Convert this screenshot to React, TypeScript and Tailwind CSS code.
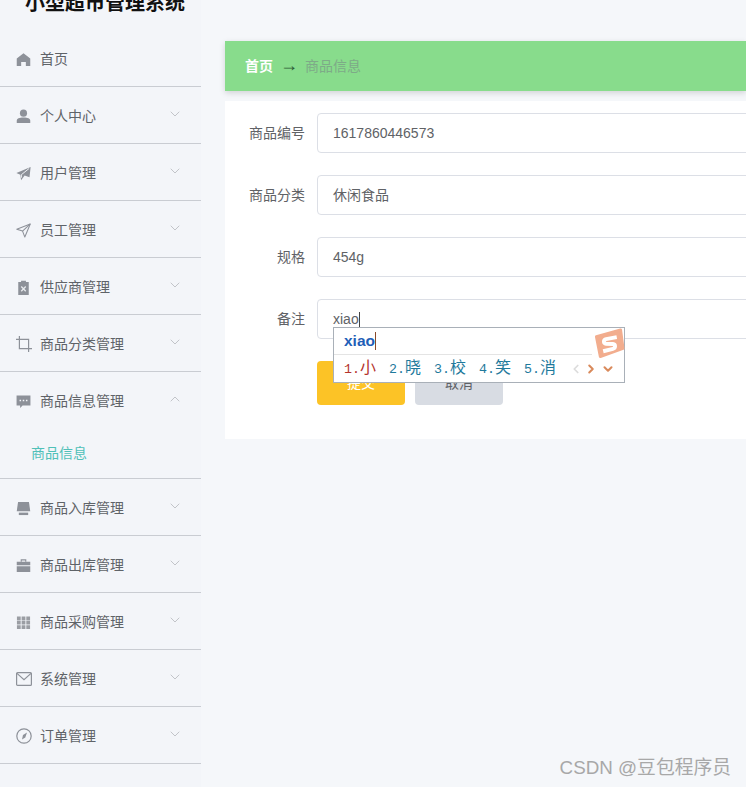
import { ChevronDown, ChevronUp } from 'lucide-react'
import type { ReactNode } from 'react'

const sans = "font-['Liberation_Sans','Noto_Sans_CJK_SC',sans-serif]"

const icons: Record<string, ReactNode> = {
  home: (
    <svg viewBox="0 0 16 16" className="w-[15px] h-[15px]" fill="#8d9199">
      <path d="M8 1.2 15.2 7v8h-4.7v-4.4h-5V15H.8V7z" />
    </svg>
  ),
  user: (
    <svg viewBox="0 0 16 16" className="w-[15px] h-[15px]" fill="#8d9199">
      <circle cx="8" cy="4.4" r="3.8" />
      <path d="M.8 15v-2.6C.8 10.2 3.4 9 8 9s7.2 1.2 7.2 3.4V15z" />
    </svg>
  ),
  plane: (
    <svg viewBox="0 0 16 16" className="w-[15px] h-[15px]">
      <path fill="#8d9199" d="M15.6 1 14.4 12 9.2 10 5.4 15.2l-.8-6L.4 7.4z" />
      <path fill="none" stroke="#f3f5f9" strokeWidth="1" d="M14 2.6 5.6 9.4l.3 3" />
    </svg>
  ),
  send: (
    <svg viewBox="0 0 16 16" className="w-[15px] h-[15px]" fill="none" stroke="#8d9199" strokeWidth="1.1" strokeLinejoin="round">
      <path d="M15.2 1 .8 6.6l6.2 2 2.4 6.4z" />
      <path d="M15.2 1 7 8.6" />
    </svg>
  ),
  clipboard: (
    <svg viewBox="0 0 16 16" className="w-[15px] h-[15px]">
      <path fill="#8d9199" d="M2.4 2h3V.8h5.2V2h3v14H2.4z" />
      <path stroke="#e8eaee" strokeWidth="1.4" d="m5.6 7 4.8 5m0-5-4.8 5" />
    </svg>
  ),
  crop: (
    <svg viewBox="0 0 16 16" className="w-4 h-4 shrink-0" fill="none" stroke="#8d9199" strokeWidth="1.2">
      <path d="M3.4 0v12.6H16" />
      <path d="M0 3.4h12.6V16" />
    </svg>
  ),
  chat: (
    <svg viewBox="0 0 16 16" className="w-[15px] h-[15px]" fill="#8d9199">
      <path d="M.6 1.5h14.8v10.8H7l-2.6 2.6v-2.6H.6z" />
      <path fill="#f3f5f9" d="M3.8 6h1.6v1.6H3.8zm3.4 0h1.6v1.6H7.2zm3.4 0h1.6v1.6h-1.6z" />
    </svg>
  ),
  inbox: (
    <svg viewBox="0 0 16 16" className="w-[15px] h-[15px]" fill="#8d9199">
      <path d="M2.2 1h11.6l1.4 9.8H.8z" />
      <path d="M3 12.4h10V15H3z" />
    </svg>
  ),
  briefcase: (
    <svg viewBox="0 0 16 16" className="w-[15px] h-[15px]" fill="#8d9199">
      <path d="M5 4V1.4h6V4h-1.2V2.6H6.2V4z" />
      <path d="M.8 4h14.4v3.8H.8zm0 4.8h14.4V15H.8z" />
    </svg>
  ),
  grid: (
    <svg viewBox="0 0 16 16" className="w-[15px] h-[15px]" fill="#9a9da3">
      <path d="M1 1.5h4v4H1zm5 0h4v4H6zm5 0h4v4h-4zM1 6.2h4v4H1zm5 0h4v4H6zm5 0h4v4h-4zM1 11h4v4H1zm5 0h4v4H6zm5 0h4v4h-4z" />
    </svg>
  ),
  mail: (
    <svg viewBox="0 0 16 14" className="w-4 h-[14px] shrink-0" fill="none" stroke="#8d9199" strokeWidth="1.2">
      <rect x="0.6" y="0.6" width="14.8" height="12.8" rx="1" />
      <path d="M1 1.4 8 7.6l7-6.2" />
    </svg>
  ),
  compass: (
    <svg viewBox="0 0 16 16" className="w-4 h-4 shrink-0">
      <circle cx="8" cy="8" r="7.2" fill="none" stroke="#8d9199" strokeWidth="1.2" />
      <path fill="#8d9199" d="M11 4.4 9.3 9.4 6 11.6l1-4.6z" />
    </svg>
  ),
}

const menu = [
  { icon: 'home', label: '首页', noArrow: true },
  { icon: 'user', label: '个人中心' },
  { icon: 'plane', label: '用户管理' },
  { icon: 'send', label: '员工管理' },
  { icon: 'clipboard', label: '供应商管理' },
  { icon: 'crop', label: '商品分类管理' },
  { icon: 'chat', label: '商品信息管理', open: true, sub: '商品信息' },
  { icon: 'inbox', label: '商品入库管理' },
  { icon: 'briefcase', label: '商品出库管理' },
  { icon: 'grid', label: '商品采购管理' },
  { icon: 'mail', label: '系统管理' },
  { icon: 'compass', label: '订单管理' },
]

function Field({ label, value, typing }: { label: string; value: string; typing?: boolean }) {
  return (
    <div className="flex items-center h-10">
      <label className="w-[80px] text-right text-[14px] text-[#606266]">{label}</label>
      <div className="flex-1 h-10 ml-[12px] mr-[-40px] pl-[15px] flex items-center bg-white border border-[#dcdfe6] rounded-l text-[14px] text-[#606266]">
        {value}
        {typing && <span className="w-px h-[15px] bg-[#444]" />}
      </div>
    </div>
  )
}

function ImePopup() {
  const candidates = [
    ['2.', '晓'],
    ['3.', '校'],
    ['4.', '笑'],
    ['5.', '消'],
  ]
  return (
    <div className="absolute left-[333px] top-[327px] w-[292px] h-[56px] bg-white border border-[#a9b0b8] font-['Liberation_Mono','Noto_Sans_CJK_SC',monospace]">
      <div className="h-[27px] mr-[32px] pl-[10px] flex items-center border-b border-[#e4e4e4]">
        <span className={`${sans} font-bold text-[15.5px] text-[#1f5fb8]`}>xiao</span>
        <span className="w-px h-[18px] bg-[#8a4a2a]" />
      </div>
      <div className="flex items-center h-[27px] pl-[10px] text-[16px] leading-none">
        <span className="w-[45px] text-[#b5342c]">
          <span className="text-[13.3px]">1.</span>小
        </span>
        {candidates.map(([n, c]) => (
          <span key={c} className="w-[45px] text-[#1f7a9c]">
            <span className="text-[13.3px]">{n}</span>
            {c}
          </span>
        ))}
        <ChevronDown className="w-[14px] h-[14px] rotate-90 text-[#dcdcdc]" strokeWidth={3} />
        <ChevronDown className="w-[14px] h-[14px] ml-[1px] -rotate-90 text-[#d98a5c]" strokeWidth={3.5} />
        <ChevronDown className="w-[14px] h-[14px] ml-[3px] text-[#d98a5c]" strokeWidth={3.5} />
      </div>
      <svg viewBox="0 0 32 32" className="absolute right-[-1px] top-[0px] w-[32px] h-[31px]">
        <path fill="#f2ad8e" stroke="#f2ad8e" strokeWidth="3" strokeLinejoin="round" d="M3 9 28 2l2.5 19L7 29.5z" />
        <path fill="none" stroke="#fff" strokeWidth="4" d="M24 9.5 13 11.5c-3 .6-3 4.4 0 4.8l7 .2c3 .4 3 4.3 0 5L10 24" />
      </svg>
    </div>
  )
}

export default function App() {
  return (
    <div className={`relative w-[746px] h-[787px] overflow-hidden bg-[#f5f7fa] ${sans}`}>
      <div className="flex h-full">
        <aside className="w-[201px] shrink-0 bg-[#f3f5f9]">
          <div className="h-[30px] flex items-end justify-center overflow-hidden pl-[9px]">
            <h1 className="text-[20px] leading-[30px] mb-[12px] font-bold text-[#111] whitespace-nowrap">小型超市管理系统</h1>
          </div>
          {menu.map((item) => (
            <div key={item.label} className="border-b border-[#c9ccd2]">
              <div className="h-[56px] flex items-center pt-[2px] pl-[16px] pr-[20px] text-[14px] text-[#5f6368]">
                <span className="w-[15px] flex justify-center">{icons[item.icon]}</span>
                <span className="ml-[9px] flex-1">{item.label}</span>
                {!item.noArrow &&
                  (item.open ? (
                    <ChevronUp className="w-4 h-4 -mt-[4px] -mr-[2px] text-[#b5b8bd]" strokeWidth={1.2} />
                  ) : (
                    <ChevronDown className="w-4 h-4 -mt-[4px] -mr-[2px] text-[#b5b8bd]" strokeWidth={1.2} />
                  ))}
              </div>
              {item.sub && (
                <div className="h-[50px] pl-[31px] flex items-center text-[14px] text-[#4fc0b8]">{item.sub}</div>
              )}
            </div>
          ))}
        </aside>

        <main className="flex-1 pl-[24px] pt-[41px] min-w-0 overflow-hidden">
          <div className="h-[50px] flex items-center pl-[20px] bg-[#88dc8c] shadow-[0_2px_6px_rgba(0,0,0,0.15)] text-[14px]">
            <span className="font-bold text-white">首页</span>
            <span className="w-[32px] flex justify-center -mt-[3px] text-[#2c5a35] text-[18px] leading-none">→</span>
            <span className="text-[#7eaa88]">商品信息</span>
          </div>
          <div className="mt-[10px] h-[338px] bg-white pt-[12px]">
            <div className="flex flex-col gap-[22px]">
              <Field label="商品编号" value="1617860446573" />
              <Field label="商品分类" value="休闲食品" />
              <Field label="规格" value="454g" />
              <Field label="备注" value="xiao" typing />
            </div>
            <div className="flex gap-[10px] ml-[92px] mt-[22px]">
              <button className="w-[88px] h-[44px] rounded bg-[#fcc326] text-[14px] text-white">提交</button>
              <button className="w-[88px] h-[44px] rounded bg-[#d8dce3] text-[14px] text-[#606266]">取消</button>
            </div>
          </div>
        </main>
      </div>

      <ImePopup />

      <div className="absolute right-[15px] top-[756px] text-[18.8px] leading-[24px] text-[#a8a8a8]">CSDN @豆包程序员</div>
    </div>
  )
}
